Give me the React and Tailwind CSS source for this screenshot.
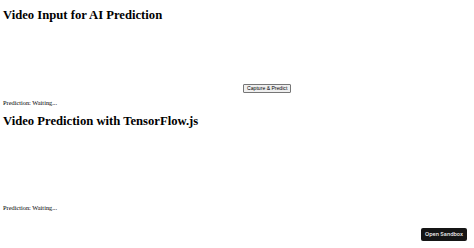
export default function App() {
  return (
    <div className="min-h-[248px] bg-white px-[3px] py-[0.1px] text-black font-['Liberation_Serif',serif] text-[6.35px]">
      {/* first section */}
      <h1 className="my-[7.6px] text-[12.65px] leading-[14px] font-bold">
        Video Input for AI Prediction
      </h1>
      <div>
        <div className="inline-block w-[238.5px] h-[60.3px] align-baseline" />{" "}
        <button className="inline-block align-baseline px-[3px] py-[0.8px] rounded-[1px] border-[0.5px] border-[#767676] bg-[#efefef] text-[5.1px] leading-[5.9px] font-['Liberation_Sans',sans-serif] text-black">
          Capture &amp; Predict
        </button>
      </div>
      <p className="my-[5.7px] leading-[7px]">Prediction: Waiting...</p>

      {/* second section */}
      <h1 className="my-[7.6px] text-[12.65px] leading-[14px] font-bold">
        Video Prediction with TensorFlow.js
      </h1>
      <div>
        <div className="inline-block w-[238.5px] h-[60.2px] align-baseline" />
      </div>
      <p className="my-[5.7px] leading-[7px]">Prediction: Waiting...</p>

      <button className="fixed right-[7px] bottom-[7px] w-[46px] h-[13px] rounded-[2px] bg-[#151515] text-white text-[5.4px] font-medium font-['Inter',sans-serif] flex items-center justify-center">
        Open Sandbox
      </button>
    </div>
  );
}
